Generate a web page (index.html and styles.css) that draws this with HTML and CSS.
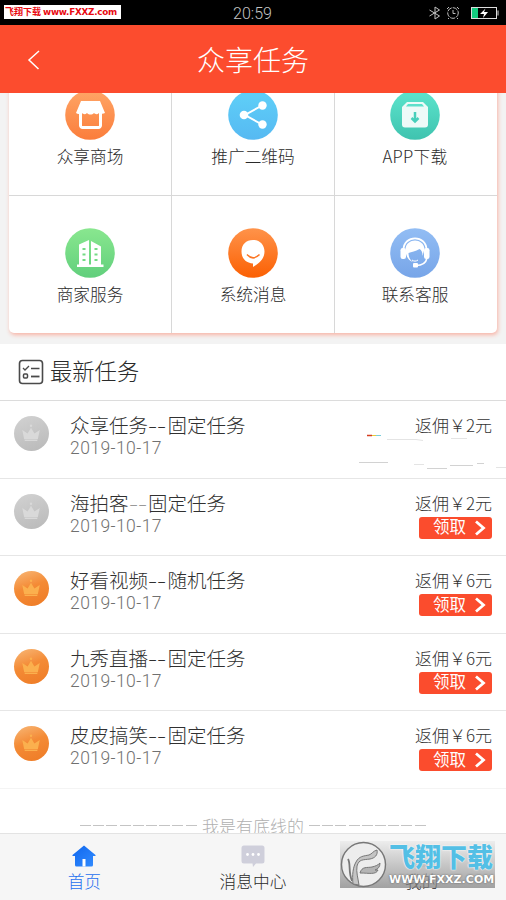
FILE: index.html
```html
<!DOCTYPE html>
<html lang="zh-CN">
<head>
<meta charset="utf-8">
<title>众享任务</title>
<link rel="stylesheet" href="styles.css">
</head>
<body>
<svg class="defs" width="0" height="0">
  <defs>
    <linearGradient id="gOrange" x1="0" y1="0" x2="0" y2="1"><stop offset="0" stop-color="#ffa566"/><stop offset="1" stop-color="#fb7d3b"/></linearGradient>
    <linearGradient id="gBlue" x1="0" y1="0" x2="0" y2="1"><stop offset="0" stop-color="#5fd0f8"/><stop offset="1" stop-color="#56b9f2"/></linearGradient>
    <linearGradient id="gTeal" x1="0" y1="0" x2="0" y2="1"><stop offset="0" stop-color="#5de5cd"/><stop offset="1" stop-color="#3fc3af"/></linearGradient>
    <linearGradient id="gGreen" x1="0" y1="0" x2="0" y2="1"><stop offset="0" stop-color="#89e78f"/><stop offset="1" stop-color="#61cf7c"/></linearGradient>
    <linearGradient id="gFire" x1="0" y1="0" x2="0" y2="1"><stop offset="0" stop-color="#ff934a"/><stop offset="1" stop-color="#fb6003"/></linearGradient>
    <linearGradient id="gSky" x1="0" y1="0" x2="0" y2="1"><stop offset="0" stop-color="#92bdf4"/><stop offset="1" stop-color="#77a5e8"/></linearGradient>
    <linearGradient id="gHome" x1="0" y1="0" x2="1" y2="1"><stop offset="0" stop-color="#0f66ee"/><stop offset="1" stop-color="#328cff"/></linearGradient>
    <symbol id="crown" viewBox="0 0 36 36">
      <path d="M8.500 14.500l5.500 3.500 3.500-6 3.500 6 5.500-3.500-2 9.500h-14z" fill="currentColor"/>
      <path d="M11 25h13" stroke="currentColor" stroke-width="1.200"/>
      <circle cx="17.500" cy="10" r="1.200" fill="currentColor"/>
    </symbol>
  </defs>
</svg>

<div class="status">
  <div class="source">飞翔下载 <span class="source-url">www.FXXZ.com</span></div>
  <span class="clock">20:59</span>
  <div class="status-icons">
    <svg width="12" height="14" viewBox="0 0 12 14" fill="none" stroke="#c4c4c4" stroke-width="1"><path d="M.5 4l10 6L6 13V1l4.500 3-10 6"/></svg>
    <svg width="14" height="14" viewBox="0 0 14 14" fill="none" stroke="#bbb" stroke-width="1"><circle cx="7" cy="7" r="5.300" stroke-dasharray="5 1"/><path d="M7 4v3.500h2.500M1 3l2-2M11 1l2 2M3 12l-1 1M11 12l1 1"/></svg>
    <svg class="battery" width="28" height="12" viewBox="0 0 28 12"><rect x=".5" y=".5" width="25" height="11" fill="none" stroke="#ddd"/><rect x="1" y="1" width="6" height="10" fill="#13cb80"/><path d="M27 3.500v5" stroke="#ddd" stroke-width="1"/><path d="M14.500 1.500L9 7h4l-1 4 5-6h-4z" fill="#fff"/></svg>
  </div>
</div>

<header class="header">
  <svg class="back" width="14" height="20" viewBox="0 0 14 20" fill="none" stroke="#fff" stroke-width="1.500"><path d="M12 1L2 10l9.500 9"/></svg>
  <h1>众享任务</h1>
</header>

<main class="content">
  <div class="grid">
    <div class="cell">
      <svg class="bubble" viewBox="0 0 50 50"><circle cx="25" cy="25" r="24.800" fill="url(#gOrange)"/><path d="M16 11h19l5 12c-3 1.500-5 0-6 0-2 2-4 1-5 0-2 2-5 2-7 0-2 2-4 1-5 0-2 1-4 1.500-6 0z" fill="#fff"/><path d="M15.500 22v13.500c0 1 1 2 2 2h16c1 0 2-1 2-2V22" fill="none" stroke="#fff" stroke-width="3"/></svg>
      <span>众享商场</span>
    </div>
    <div class="cell">
      <svg class="bubble" viewBox="0 0 50 50"><circle cx="25" cy="25" r="24.800" fill="url(#gBlue)"/><path d="M34 15.500L17 25l17 9.500" fill="none" stroke="#fff" stroke-width="2"/><circle cx="16" cy="25" r="4.300" fill="#fff"/><circle cx="34.500" cy="15.500" r="4.200" fill="#fff"/><circle cx="34.500" cy="34.500" r="4.200" fill="#fff"/></svg>
      <span>推广二维码</span>
    </div>
    <div class="cell">
      <svg class="bubble" viewBox="0 0 50 50"><circle cx="25" cy="25" r="24.800" fill="url(#gTeal)"/><path d="M17 12h16l5 5v17.500a3 3 0 0 1-3 3H15a3 3 0 0 1-3-3V17z" fill="#eefaf8"/><path d="M18 14h14l2 2.500H16z" fill="#5ee0cb"/><path d="M25 22v9M21.500 28l3.500 3.500 3.500-3.500" fill="none" stroke="#48cfbb" stroke-width="2.500"/></svg>
      <span class="app">APP下载</span>
    </div>
    <div class="cell">
      <svg class="bubble" viewBox="0 0 50 50"><circle cx="25" cy="25" r="24.800" fill="url(#gGreen)"/><path d="M12 36.500h2V16.500L24 12v24.500h2V13l10 5.500v18h2.500V39H12z" fill="#fff"/><path d="M17.500 21h3M17.500 26.500h3M17.500 32h3M29.500 21h3M29.500 26.500h3M29.500 32h3" stroke="#74db85" stroke-width="2.200"/></svg>
      <span>商家服务</span>
    </div>
    <div class="cell">
      <svg class="bubble" viewBox="0 0 50 50"><circle cx="25" cy="25" r="24.800" fill="url(#gFire)"/><path d="M25 12c7 0 11.500 5 11.500 11.500 0 8-6 12-11.500 15.500v-3.500c-7-.5-11.500-5-11.500-12S18 12 25 12z" fill="#fff"/><path d="M19 26.500c4 4.500 8 4.500 12.500 0" fill="none" stroke="#fc7624" stroke-width="1.600"/></svg>
      <span>系统消息</span>
    </div>
    <div class="cell">
      <svg class="bubble" viewBox="0 0 50 50"><circle cx="25" cy="25" r="24.800" fill="url(#gSky)"/><path d="M13.500 22C13.500 6.500 36.500 6.500 36.500 22" fill="none" stroke="#fff" stroke-width="1.800"/><path d="M15.500 21C16.500 9.500 33.500 9.500 34.500 21l-2 7c0-4-1-6-3-7-4 2.500-8 3-11 4 0 4 2 8 5 9-4-.5-8-5-8-13z" fill="#fff"/><rect x="10.500" y="20" width="5.500" height="11" rx="2.200" fill="#fff"/><rect x="34" y="20" width="5.500" height="11" rx="2.200" fill="#fff"/><path d="M37 30c-1 5-5 7.500-11 7.500" fill="none" stroke="#fff" stroke-width="1.500"/><rect x="23" y="35" width="5" height="4.500" rx="1" fill="#fff"/><path d="M22 32c2 1.500 4 1.500 6 0" stroke="#fff" fill="none"/></svg>
      <span>联系客服</span>
    </div>
  </div>

  <section class="tasks">
    <div class="section-head">
      <svg width="26" height="26" viewBox="0 0 26 26" fill="none" stroke="#4a4a4a"><rect x="1.500" y="1.500" width="23" height="23" rx="3" stroke-width="1.600"/><path d="M5 9l2 2 4-4M13 9.500h8.500" stroke-width="1.300"/><path d="M13 17.500h8.500" stroke-width="1.800"/><rect x="5.500" y="15" width="4" height="4" rx="1" stroke-width="1.500"/></svg>
      <h2>最新任务</h2>
    </div>
    <div class="task">
      <svg class="medal silver"><use href="#crown"/></svg>
      <div class="info"><div class="name">众享任务<i>--</i>固定任务</div><div class="date">2019-10-17</div></div>
      <div class="side"><div class="price">返佣￥2元</div></div>
      <svg class="traces" width="148" height="38" viewBox="0 0 148 38" fill="none"><path d="M9 4.500h5" stroke="#d43c20" stroke-width="1.500"/><path d="M14 4.500h4" stroke="#e6c93a"/><path d="M18 4.500h5" stroke="#79cddb"/><path d="M29 8.500h29l7 1M93 7.500h16M56 33.500h10M138 36.500h10" stroke="#e4e4e4"/><path d="M1 31.500h29M69 37.500h20M92 34.500h23M119 32.500h7" stroke="#d2d2d2"/></svg>
    </div>
    <div class="task">
      <svg class="medal silver"><use href="#crown"/></svg>
      <div class="info"><div class="name">海拍客<i class="faint">--</i>固定任务</div><div class="date">2019-10-17</div></div>
      <div class="side"><div class="price">返佣￥2元</div><div class="claim"><span>领取</span><svg viewBox="0 0 12 16"><path d="M2 1.500L9.500 8 2 14.500"/></svg></div></div>
    </div>
    <div class="task">
      <svg class="medal gold"><use href="#crown"/></svg>
      <div class="info"><div class="name">好看视频<i>--</i>随机任务</div><div class="date">2019-10-17</div></div>
      <div class="side"><div class="price">返佣￥6元</div><div class="claim"><span>领取</span><svg viewBox="0 0 12 16"><path d="M2 1.500L9.500 8 2 14.500"/></svg></div></div>
    </div>
    <div class="task">
      <svg class="medal gold"><use href="#crown"/></svg>
      <div class="info"><div class="name">九秀直播<i>--</i>固定任务</div><div class="date">2019-10-17</div></div>
      <div class="side"><div class="price">返佣￥6元</div><div class="claim"><span>领取</span><svg viewBox="0 0 12 16"><path d="M2 1.500L9.500 8 2 14.500"/></svg></div></div>
    </div>
    <div class="task last">
      <svg class="medal gold"><use href="#crown"/></svg>
      <div class="info"><div class="name">皮皮搞笑<i>--</i>固定任务</div><div class="date">2019-10-17</div></div>
      <div class="side"><div class="price">返佣￥6元</div><div class="claim"><span>领取</span><svg viewBox="0 0 12 16"><path d="M2 1.500L9.500 8 2 14.500"/></svg></div></div>
    </div>
    <div class="end"><span class="dashes"></span>我是有底线的<span class="dashes"></span></div>
  </section>
</main>

<nav class="tabs">
  <div class="tab active">
    <svg width="24" height="22" viewBox="0 0 24 22"><path d="M12 .5L23.500 10v1H21v9a1.500 1.500 0 0 1-1.500 1.500H4.500A1.500 1.500 0 0 1 3 20v-9H.5v-1z" fill="url(#gHome)"/><path d="M10.500 14h3v7.500h-3z" fill="#fff"/></svg>
    <span>首页</span>
  </div>
  <div class="tab">
    <svg width="24" height="22" viewBox="0 0 24 22"><path d="M3 .5h18a2.500 2.500 0 0 1 2.500 2.500v13a2.500 2.500 0 0 1-2.500 2.500h-6L12 22l-.5-3.500H3A2.500 2.500 0 0 1 .5 16V3A2.500 2.500 0 0 1 3 .5z" fill="#cfcfdb"/><g fill="#fff"><circle cx="6.500" cy="9.500" r="1.400"/><circle cx="12" cy="9.500" r="1.400"/><circle cx="17.500" cy="9.500" r="1.400"/></g></svg>
    <span>消息中心</span>
  </div>
  <div class="tab">
    <svg width="24" height="22" viewBox="0 0 24 22"><circle cx="12" cy="7" r="6" fill="#cfcfdb"/><path d="M2 22c0-10 20-10 20 0z" fill="#cfcfdb"/></svg>
    <span>我的</span>
  </div>
  <div class="brand">
    <svg width="47" height="47" viewBox="0 0 47 47"><circle cx="23.500" cy="23.500" r="22" fill="#ededed" stroke="#777" stroke-width="1.400"/><path d="M13 43c-1-9 0-17 3-22 3-6 8-6 13-7 3-1 4-4 8-5 1 5-2 8-7 9-7 1-11 0-13 7-1 6 1 12 2 19z" fill="#c4c4c4" stroke="#777" stroke-width="1"/><path d="M20 32c2-7 7-5 12-6 4-1 6-2 8-4 0 4-2 6-5 7h3c-2 5-9 3-18 3z" fill="#b4b4b4" stroke="#777" stroke-width="1"/><path d="M8 18c3 5 0 12 4 22" fill="none" stroke="#777" stroke-width="1.800"/></svg>
    <div class="brand-text"><div class="brand-name">飞翔下载</div><div class="brand-url">WWW.FXXZ.COM</div></div>
  </div>
</nav>
</body>
</html>
```
FILE: styles.css
```css
* { box-sizing: border-box; }
body {
  margin: 0;
  width: 506px;
  height: 900px;
  overflow: hidden;
  display: flex;
  flex-direction: column;
  background: #f3f3f3;
  color: #2a2a2a;
  font-family: "Noto Sans CJK SC", sans-serif;
  font-weight: 300;
}
svg { flex: none; display: block; }
.defs { position: absolute; }
h1, h2 { margin: 0; font-weight: 300; }

.status {
  flex: none;
  height: 25px;
  padding: 0 7px 0 4px;
  background: #000;
  display: grid;
  grid-template-columns: 1fr auto 1fr;
  align-items: center;
}
.source {
  width: 117px;
  height: 14px;
  margin-top: -1px;
  padding-left: 1px;
  background: #fff;
  color: #e8080f;
  font-size: 9px;
  font-weight: 700;
  line-height: 14px;
  white-space: nowrap;
}
.source-url { font: 700 8.800px/14px "DejaVu Sans", sans-serif; letter-spacing: -.25px; }
.clock {
  font: 300 16px/22px Roboto, sans-serif;
  color: #c4c4c4;
  padding: 3px 0 0 2px;
}
.status-icons {
  justify-self: end;
  display: flex;
  align-items: center;
  gap: 5px;
}
.battery { margin-left: 6px; }

.header {
  flex: none;
  height: 68px;
  padding: 0 27px;
  background: #fc4c2e;
  color: #fff;
  display: grid;
  grid-template-columns: 1fr auto 1fr;
  align-items: center;
}
.header h1 { font-size: 28px; line-height: 40px; margin-top: -1px; }
.back { margin-top: 1px; }

.content {
  flex: none;
  height: 740px;
  overflow: hidden;
  display: flex;
  flex-direction: column;
}
.grid {
  flex: none;
  margin: -36px 9px 0;
  width: 488px;
  height: 276px;
  display: grid;
  grid-template-columns: 163px 163px 162px;
  grid-template-rows: 139px 137px;
  background: #fff;
  border-radius: 5px;
  box-shadow: 1px 2px 4px #f9b3a5;
}
.cell {
  border-right: 1px solid #d8d8d8;
  border-bottom: 1px solid #d8d8d8;
  display: flex;
  flex-direction: column;
  align-items: center;
  padding: 33px 0 0;
  font-size: 16.700px;
  line-height: 24px;
  gap: 4px;
}
.cell:nth-child(3n) { border-right: 0; padding-right: 2px; }
.cell:nth-child(n+4) { border-bottom: 0; padding-top: 32px; }
.bubble { width: 50px; height: 50px; }
.app { letter-spacing: .3px; }

.tasks { flex: none; margin-top: 11px; background: #fff; height: 500px; }
.section-head {
  height: 57px;
  border-bottom: 1px solid #dcdcdc;
  padding: 0 18px;
  display: flex;
  align-items: center;
  gap: 6px;
}
.section-head h2 { font-size: 22.300px; line-height: 32px; margin-top: -4px; }
.task {
  position: relative;
  height: 77.500px;
  padding: 0 14px;
  border-bottom: 1px solid #e6e6e6;
  display: flex;
}
.task.last { border-color: #f4f4f4; }
.medal { width: 35px; height: 35px; margin-top: 15px; border-radius: 50%; }
.silver { background: linear-gradient(160deg, #d2d2d2, #b9b9b9); color: #d9d9d9; }
.gold { background: linear-gradient(160deg, #f8b878, #f48b36 45%, #ee7b25); color: #fbb04e; }
.info { margin: 10px 0 0 21px; flex: 1; }
.name { font-size: 19.500px; line-height: 28px; color: #303030; white-space: nowrap; }
.name i { display: inline-block; width: 19.500px; font-style: normal; transform: scaleX(1.400); transform-origin: 0 50%; }
.name .faint { color: #999; }
.date { font: 300 17.500px/19px Roboto, sans-serif; color: #707070; letter-spacing: .42px; }
.side { display: flex; flex-direction: column; align-items: flex-end; padding-top: 12px; }
.price { font-size: 17px; line-height: 24px; white-space: nowrap; color: #333; }
.claim {
  width: 73px;
  height: 22px;
  margin-top: 2px;
  padding: 0 6px 0 14px;
  border-radius: 3px;
  background: #fb4c2d;
  color: #fff;
  font-size: 16.500px;
  font-weight: 400;
  line-height: 20px;
  display: flex;
  align-items: center;
  justify-content: space-between;
}
.claim span { padding-bottom: 3px; }
.claim svg { width: 12px; height: 16px; fill: none; stroke: #fff; stroke-width: 2.800px; }
.traces { position: absolute; left: 358px; top: 30px; }
.end {
  display: flex;
  align-items: center;
  justify-content: center;
  gap: 5px;
  padding-top: 24px;
  font-size: 17px;
  line-height: 25px;
  color: #b0b0b0;
}
.dashes {
  width: 117px;
  height: 1px;
  background: repeating-linear-gradient(90deg, #c4c4c4 0 11px, transparent 11px 13.200px);
}

.tabs {
  position: relative;
  flex: none;
  height: 67px;
  background: #f6f6f6;
  border-top: 1px solid #e3e3e3;
  display: grid;
  grid-template-columns: repeat(3, 1fr);
}
.tab {
  display: flex;
  flex-direction: column;
  align-items: center;
  padding-top: 11px;
  gap: 2px;
  font-size: 16.700px;
  line-height: 25px;
}
.active { color: #1e70f0; }
.brand {
  position: absolute;
  left: 340px;
  top: 7px;
  width: 155px;
  height: 47px;
  background: linear-gradient(rgba(235, 235, 235, .85), rgba(125, 125, 125, .7));
  display: flex;
}
.brand-text { padding-left: 2px; }
.brand-name {
  height: 33px;
  color: #53bfe5;
  font-size: 26px;
  font-weight: 900;
  line-height: 29px;
  white-space: nowrap;
  text-shadow: 0 0 2px #fff, 0 0 1px #fff;
}
.brand-url {
  color: #fff;
  font: 700 11px/12px "DejaVu Sans", sans-serif;
  white-space: nowrap;
  letter-spacing: .05px;
  text-shadow: 0 0 2px #555;
}
```
